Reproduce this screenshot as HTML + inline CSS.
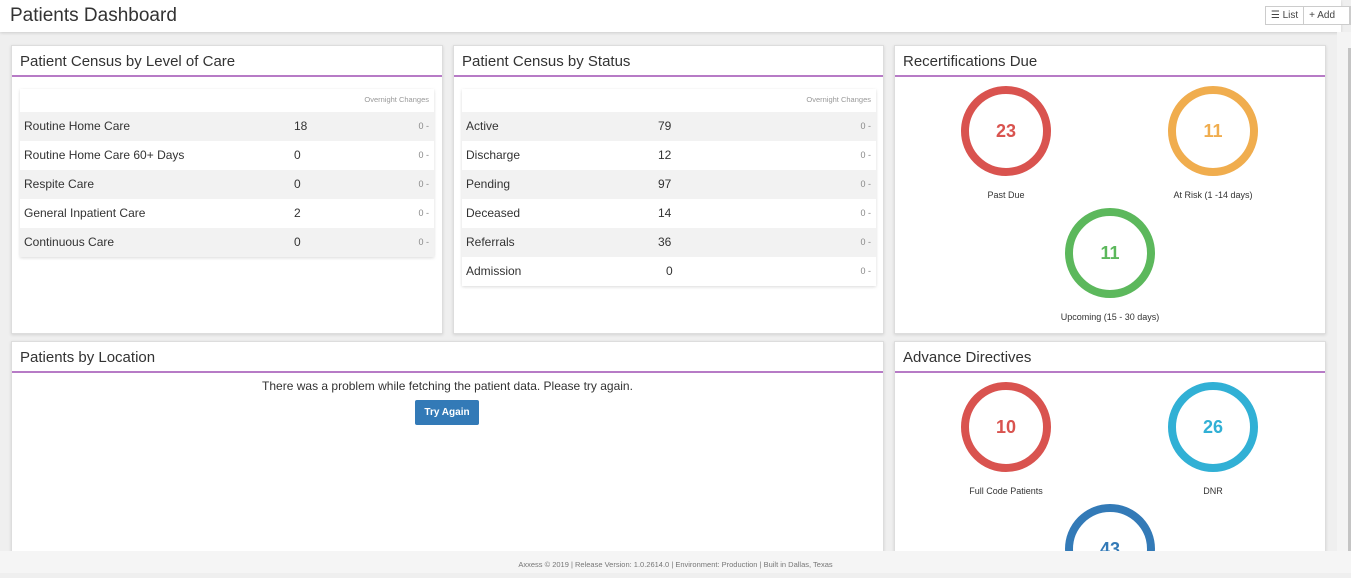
<!DOCTYPE html>
<html><head><style>
*{box-sizing:border-box;margin:0;padding:0}
body{width:1351px;height:573px;overflow:hidden;background:#efefef;font-family:"Liberation Sans",sans-serif;color:#333;position:relative}
.top{position:absolute;left:0;top:0;width:1341px;height:32px;background:#fff;box-shadow:0 1px 3px rgba(0,0,0,.15)}
.top h1{position:absolute;left:10px;top:5px;font-weight:normal;font-size:19px;color:#333}
.btns{position:absolute;right:-10px;top:6px;display:flex;border:1px solid #ccc;font-size:10px;background:#fff}
.btns span{padding:3px 5px;border-right:1px solid #ccc;color:#444}
.scroll{position:absolute;right:0;top:32px;width:14px;height:519px;background:#f4f4f4}
.scroll i{position:absolute;right:0;top:16px;width:3px;height:503px;background:#c4c4c4}
.panel{position:absolute;background:#fff;border:1px solid #ddd;box-shadow:0 1px 3px rgba(0,0,0,.12)}
.panel h2{font-weight:normal;font-size:15px;height:31px;line-height:31px;padding-left:8px;border-bottom:2px solid #b77bc6;color:#333}
.tbl{position:absolute;left:8px;top:43px;width:414px;background:#fff;box-shadow:0 1px 3px rgba(0,0,0,.15)}
.hdr{height:23px;font-size:7.5px;color:#999;text-align:right;padding:6px 5px 0 0}
.row{height:29px;position:relative;font-size:12px;line-height:29px}
.row:nth-child(even){background:#f2f2f2}
.row .l{position:absolute;left:4px}
.row .n{position:absolute;left:274px}
.row .c{position:absolute;right:5px;font-size:9px;color:#888}
.circ{position:absolute;width:90px;height:90px;border-radius:50%;border:8px solid;text-align:center;line-height:74px;font-size:18px;font-weight:bold}
.lab{position:absolute;font-size:9px;width:200px;text-align:center;color:#333}
.footer{position:absolute;left:0;top:551px;width:1351px;height:22px;background:#f5f5f5;font-size:7.5px;color:#777;text-align:center;line-height:27px}
</style></head><body>
<div class="top"><h1>Patients Dashboard</h1>
<div class="btns"><span>☰ List</span><span style="padding-right:14px">+ Add</span></div></div>
<div class="scroll"><i></i></div>

<div class="panel" style="left:11px;top:45px;width:432px;height:289px">
<h2>Patient Census by Level of Care</h2>
<div class="tbl"><div class="hdr">Overnight Changes</div>
<div class="row"><span class="l">Routine Home Care</span><span class="n">18</span><span class="c">0 -</span></div>
<div class="row"><span class="l">Routine Home Care 60+ Days</span><span class="n">0</span><span class="c">0 -</span></div>
<div class="row"><span class="l">Respite Care</span><span class="n">0</span><span class="c">0 -</span></div>
<div class="row"><span class="l">General Inpatient Care</span><span class="n">2</span><span class="c">0 -</span></div>
<div class="row"><span class="l">Continuous Care</span><span class="n">0</span><span class="c">0 -</span></div>
</div></div>

<div class="panel" style="left:453px;top:45px;width:431px;height:289px">
<h2>Patient Census by Status</h2>
<div class="tbl"><div class="hdr">Overnight Changes</div>
<div class="row"><span class="l">Active</span><span class="n" style="left:196px">79</span><span class="c">0 -</span></div>
<div class="row"><span class="l">Discharge</span><span class="n" style="left:196px">12</span><span class="c">0 -</span></div>
<div class="row"><span class="l">Pending</span><span class="n" style="left:196px">97</span><span class="c">0 -</span></div>
<div class="row"><span class="l">Deceased</span><span class="n" style="left:196px">14</span><span class="c">0 -</span></div>
<div class="row"><span class="l">Referrals</span><span class="n" style="left:196px">36</span><span class="c">0 -</span></div>
<div class="row"><span class="l">Admission</span><span class="n" style="left:204px">0</span><span class="c">0 -</span></div>
</div></div>

<div class="panel" style="left:894px;top:45px;width:432px;height:289px">
<h2>Recertifications Due</h2>
<div class="circ" style="left:66px;top:40px;border-color:#d9534f;color:#d9534f">23</div>
<div class="lab" style="left:11px;top:144px">Past Due</div>
<div class="circ" style="left:273px;top:40px;border-color:#f0ad4e;color:#f0ad4e">11</div>
<div class="lab" style="left:218px;top:144px">At Risk (1 -14 days)</div>
<div class="circ" style="left:170px;top:162px;border-color:#5cb85c;color:#5cb85c">11</div>
<div class="lab" style="left:115px;top:266px">Upcoming (15 - 30 days)</div>
</div>

<div class="panel" style="left:11px;top:341px;width:873px;height:220px">
<h2>Patients by Location</h2>
<div style="text-align:center;font-size:12px;margin-top:6px">There was a problem while fetching the patient data. Please try again.</div>
<div style="position:absolute;left:403px;top:58px;width:64px;height:25px;background:#337ab7;color:#fff;font-size:10px;font-weight:bold;text-align:center;line-height:25px;border-radius:2px">Try Again</div>
</div>

<div class="panel" style="left:894px;top:341px;width:432px;height:220px;overflow:hidden">
<h2>Advance Directives</h2>
<div class="circ" style="left:66px;top:40px;border-color:#d9534f;color:#d9534f">10</div>
<div class="lab" style="left:11px;top:144px">Full Code Patients</div>
<div class="circ" style="left:273px;top:40px;border-color:#31b0d5;color:#31b0d5">26</div>
<div class="lab" style="left:218px;top:144px">DNR</div>
<div class="circ" style="left:170px;top:162px;border-color:#337ab7;color:#337ab7">43</div>
</div>

<div class="footer">Axxess © 2019 | Release Version: 1.0.2614.0 | Environment: Production | Built in Dallas, Texas</div>
</body></html>
